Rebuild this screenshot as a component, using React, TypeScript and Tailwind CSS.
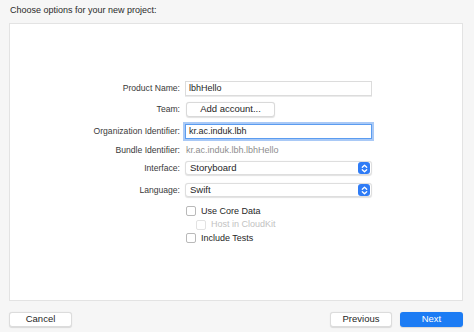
import React from 'react';

function Stepper() {
  return (
    <span className="flex h-[12px] w-[12px] items-center justify-center rounded-[3px] bg-[#2f7cf6]">
      <svg width="7" height="9" viewBox="0 0 7 9" fill="none" stroke="white" strokeWidth="1.3" strokeLinecap="round" strokeLinejoin="round">
        <path d="M1.3 3.3 3.5 1.2 5.7 3.3" />
        <path d="M1.3 5.7 3.5 7.8 5.7 5.7" />
      </svg>
    </span>
  );
}

function Check({ label, disabled, indent }: { label: string; disabled?: boolean; indent?: boolean }) {
  return (
    <div className={`flex h-[13.5px] items-center gap-[5px] ${indent ? 'pl-[10px]' : ''}`}>
      <span
        className={`h-[10px] w-[10px] rounded-[2px] border bg-white ${disabled ? 'border-[#e2e2e2]' : 'border-[#b9b9b9]'}`}
      />
      <span className={disabled ? 'text-[#c2c2c2]' : 'text-[#262626]'}>{label}</span>
    </div>
  );
}

export default function App() {
  const label = 'w-[166px] shrink-0 pr-[5px] text-right text-[8.6px] text-[#3a3a3a]';

  return (
    <div className="flex h-[332px] w-[474px] flex-col bg-[#f6f6f6] font-['Liberation_Sans',Arial,sans-serif] text-[9px] text-[#262626]">
      <div className="px-[10px] pt-[4px] text-[9px] text-[#2a2a2a]">Choose options for your new project:</div>

      <div className="ml-[9px] mr-[11px] mt-[5px] flex h-[278px] flex-col border border-[#e3e3e3] bg-white pt-[57px] pl-[9px]">
        {/* Product Name */}
        <div className="flex h-[16px] items-center">
          <span className={label}>Product Name:</span>
          <div className="flex h-[15px] w-[187px] items-center border border-[#dcdcdc] bg-white px-[3px] shadow-[0_0.5px_0.5px_rgba(0,0,0,0.08)]">
            lbhHello
          </div>
        </div>

        {/* Team */}
        <div className="mt-[5px] flex h-[16px] items-center">
          <span className={label}>Team:</span>
          <button className="ml-[1px] flex h-[15px] w-[89px] items-center justify-center rounded-[3px] border border-[#d9d9d9] bg-white text-[9.5px] text-[#262626] shadow-[0_0.5px_1px_rgba(0,0,0,0.12)]">
            Add account...
          </button>
        </div>

        {/* Organization Identifier */}
        <div className="mt-[6px] flex h-[16px] items-center">
          <span className={label}>Organization Identifier:</span>
          <div className="flex h-[15px] w-[187px] items-center border border-[#5b9cf0] bg-white px-[3px] outline outline-[2px] outline-[#a9c9f6]">
            kr.ac.induk.lbh
          </div>
        </div>

        {/* Bundle Identifier */}
        <div className="mt-[4px] flex h-[14px] items-center">
          <span className={label}>Bundle Identifier:</span>
          <span className="pl-[1px] text-[#8e8e8e]">kr.ac.induk.lbh.lbhHello</span>
        </div>

        {/* Interface */}
        <div className="mt-[3px] flex h-[15px] items-center">
          <span className={label}>Interface:</span>
          <div className="flex h-[14px] w-[187px] items-center justify-between rounded-[3px] border border-[#dedede] bg-white pl-[4px] pr-[1px] text-[9.5px] shadow-[0_0.5px_1px_rgba(0,0,0,0.12)]">
            <span>Storyboard</span>
            <Stepper />
          </div>
        </div>

        {/* Language */}
        <div className="mt-[7px] flex h-[15px] items-center">
          <span className={label}>Language:</span>
          <div className="flex h-[14px] w-[187px] items-center justify-between rounded-[3px] border border-[#dedede] bg-white pl-[4px] pr-[1px] text-[9.5px] shadow-[0_0.5px_1px_rgba(0,0,0,0.12)]">
            <span>Swift</span>
            <Stepper />
          </div>
        </div>

        {/* Options */}
        <div className="mt-[7px] flex flex-col pl-[167px]">
          <Check label="Use Core Data" />
          <Check label="Host in CloudKit" disabled indent />
          <Check label="Include Tests" />
        </div>
      </div>

      <div className="mt-[11px] flex items-center pl-[9px] pr-[11px]">
        <button className="flex h-[15px] w-[63px] items-center justify-center rounded-[3px] border border-[#dcdcdc] bg-white text-[9.5px] text-[#262626] shadow-[0_0.5px_1px_rgba(0,0,0,0.12)]">
          Cancel
        </button>
        <div className="flex-1" />
        <button className="flex h-[15px] w-[62px] items-center justify-center rounded-[3px] border border-[#dcdcdc] bg-white text-[9.5px] text-[#262626] shadow-[0_0.5px_1px_rgba(0,0,0,0.12)]">
          Previous
        </button>
        <button className="ml-[8px] flex h-[15px] w-[63px] items-center justify-center rounded-[3px] bg-[#1c7cf4] text-[9.5px] text-white shadow-[0_0.5px_1px_rgba(0,0,0,0.12)]">
          Next
        </button>
      </div>
    </div>
  );
}
